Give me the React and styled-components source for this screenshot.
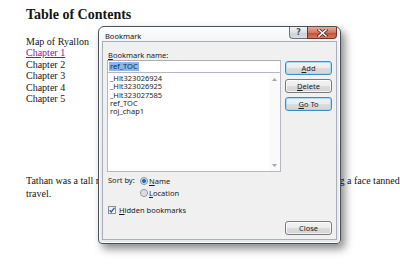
import React from 'react'
import styled, { createGlobalStyle } from 'styled-components'

const bookmarks = ['_Hlt323026924', '_Hlt323026925', '_Hlt323027585', 'ref_TOC', 'roj_chap1']
const chapters = ['Chapter 1', 'Chapter 2', 'Chapter 3', 'Chapter 4', 'Chapter 5']

const GlobalStyle = createGlobalStyle`
  html, body {
    margin: 0;
    padding: 0;
    background: #fff;
    overflow: hidden;
  }
`

class App extends React.Component {
  render () {
    return (
      <Page>
        <GlobalStyle />
        <Heading>Table of Contents</Heading>
        <TocList>
          <TocEntry>Map of Ryallon</TocEntry>
          {chapters.map((c, i) => (
            <TocEntry key={c} $visited={i === 0}>{c}</TocEntry>
          ))}
        </TocList>
        <Story>
          Tathan was a tall man with a rather lean, wiry build and long dark hair, sporting a face tanned by years of
          <br />
          travel.
        </Story>

        <Window>
          <TitleBar>
            <Title>Bookmark</Title>
            <CaptionButtons>
              <HelpButton>?</HelpButton>
              <CloseCaption>
                <svg width='11' height='8' viewBox='0 0 11 8'>
                  <path d='M2 1 L9 7 M9 1 L2 7' stroke='#5a1f1a' strokeWidth='3' strokeLinecap='square' />
                  <path d='M2 1 L9 7 M9 1 L2 7' stroke='#fff' strokeWidth='1.6' strokeLinecap='square' />
                </svg>
              </CloseCaption>
            </CaptionButtons>
          </TitleBar>

          <Client>
            <LeftCol>
              <FieldLabel><u>B</u>ookmark name:</FieldLabel>
              <NameInput><Selected>ref_TOC</Selected></NameInput>
              <ListBox>
                <Items>
                  {bookmarks.map(b => <Item key={b}>{b}</Item>)}
                </Items>
                <ScrollTrack>
                  <ArrowBox>
                    <svg width='5' height='3' viewBox='0 0 5 3'><path d='M0 3 L2.5 0 L5 3 Z' fill='#a4a4a4' /></svg>
                  </ArrowBox>
                  <ArrowBox>
                    <svg width='5' height='3' viewBox='0 0 5 3'><path d='M0 0 L2.5 3 L5 0 Z' fill='#a4a4a4' /></svg>
                  </ArrowBox>
                </ScrollTrack>
              </ListBox>

              <SortRow>
                <SortLabel>Sort by:</SortLabel>
                <RadioGroup>
                  <OptionRow>
                    <Radio $checked />
                    <span><u>N</u>ame</span>
                  </OptionRow>
                  <OptionRow>
                    <Radio />
                    <span><u>L</u>ocation</span>
                  </OptionRow>
                </RadioGroup>
              </SortRow>

              <CheckRow>
                <CheckBox>
                  <svg width='6' height='6' viewBox='0 0 6 6'>
                    <path d='M0.6 3.2 L2.3 5 L5.4 0.8' stroke='#2a56a8' strokeWidth='1.3' fill='none' />
                  </svg>
                </CheckBox>
                <span><u>H</u>idden bookmarks</span>
              </CheckRow>
            </LeftCol>

            <RightCol>
              <PushButton $focused><span><u>A</u>dd</span></PushButton>
              <PushButton><span><u>D</u>elete</span></PushButton>
              <PushButton $focused><span><u>G</u>o To</span></PushButton>
              <CloseButton>Close</CloseButton>
            </RightCol>
          </Client>
        </Window>
      </Page>
    )
  }
}

export default App

/*
Styles
 */

const Page = styled.div`
  position: relative;
  width: 400px;
  height: 271px;
  box-sizing: border-box;
  overflow: hidden;
  padding: 7px 0 0 26px;
  font-family: "Liberation Serif", "Times New Roman", serif;
  color: #141414;
`

const Heading = styled.h1`
  margin: 0;
  font-size: 14px;
  line-height: 16px;
  font-weight: bold;
`

const TocList = styled.div`
  display: flex;
  flex-direction: column;
  margin-top: 13px;
`

const TocEntry = styled.div`
  font-size: 10px;
  line-height: 11.4px;
  color: ${p => p.$visited ? '#7b1c86' : 'inherit'};
  text-decoration: ${p => p.$visited ? 'underline' : 'none'};
  align-self: flex-start;
`

const Story = styled.p`
  margin: 71px 0 0;
  font-size: 10px;
  line-height: 12.5px;
  white-space: nowrap;
`

const Window = styled.div`
  position: absolute;
  left: 98px;
  top: 26px;
  width: 243px;
  height: 218px;
  box-sizing: border-box;
  display: flex;
  flex-direction: column;
  padding: 0 3px 3px;
  border: 1px solid #4b5058;
  border-radius: 6px 6px 4px 4px;
  background: linear-gradient(#fbfcfd, #eceff3 30px, #e6e9ed);
  box-shadow: inset 0 0 0 1px rgba(255, 255, 255, 0.85), 4px 5px 9px rgba(0, 0, 0, 0.45);
  font-family: "Noto Sans", "Open Sans", sans-serif;
  font-size: 7.5px;
  color: #1b1b1b;
`

const TitleBar = styled.div`
  display: flex;
  align-items: flex-start;
  height: 14px;
`

const Title = styled.div`
  padding: 5px 0 0 3px;
  font-size: 7.5px;
  line-height: 9px;
  color: #111;
`

const CaptionButtons = styled.div`
  display: flex;
  margin-left: auto;
`

const CaptionBase = styled.div`
  height: 12px;
  box-sizing: border-box;
  display: flex;
  align-items: center;
  justify-content: center;
  border: 1px solid #6d7480;
  border-top: none;
`

const HelpButton = styled(CaptionBase)`
  width: 18px;
  border-radius: 0 0 0 4px;
  border-right: none;
  background: linear-gradient(#f1f3f5, #dde1e6 50%, #cdd2d8 51%, #d8dde2);
  font-family: "DejaVu Sans", sans-serif;
  font-size: 8px;
  font-weight: bold;
  color: #4a4f57;
`

const CloseCaption = styled(CaptionBase)`
  width: 30px;
  border-radius: 0 0 4px 0;
  border-color: #7a2e28;
  background: linear-gradient(#eaa99d, #d7735f 50%, #c24a33 51%, #d27a63);
`

const Client = styled.div`
  flex: 1;
  display: flex;
  gap: 4px;
  box-sizing: border-box;
  padding: 9px 4px 4px;
  background: #f0f0f0;
  border: 1px solid #a9afb7;
`

const LeftCol = styled.div`
  width: 174px;
  display: flex;
  flex-direction: column;
`

const FieldLabel = styled.div`
  height: 9px;
  line-height: 9px;
  padding-left: 1px;
`

const NameInput = styled.div`
  height: 13px;
  box-sizing: border-box;
  display: flex;
  align-items: center;
  padding: 0 1px;
  background: #fff;
  border: 1px solid #b5b8c0;
  border-top-color: #abadb3;
`

const Selected = styled.span`
  background: #88b8ec;
  color: #0d2b5a;
  line-height: 9px;
  padding: 0 1px;
`

const ListBox = styled.div`
  height: 99px;
  box-sizing: border-box;
  display: flex;
  background: #fff;
  border: 1px solid #b5b8c0;
  border-top: none;
`

const Items = styled.div`
  flex: 1;
  display: flex;
  flex-direction: column;
  padding: 1px 0 0 2px;
`

const Item = styled.div`
  line-height: 8.25px;
`

const ScrollTrack = styled.div`
  width: 11px;
  display: flex;
  flex-direction: column;
  justify-content: space-between;
  background: #fafafa;
`

const ArrowBox = styled.div`
  height: 12px;
  display: flex;
  align-items: center;
  justify-content: center;
`

const SortRow = styled.div`
  display: flex;
  margin-top: 3px;
  padding-left: 1px;
`

const SortLabel = styled.div`
  width: 32px;
  line-height: 11px;
`

const RadioGroup = styled.div`
  display: flex;
  flex-direction: column;
  gap: 1px;
`

const OptionRow = styled.div`
  height: 11px;
  display: flex;
  align-items: center;
  gap: 1px;
`

const Radio = styled.div`
  width: 8px;
  height: 8px;
  box-sizing: border-box;
  border-radius: 50%;
  border: 1px solid #8a8f96;
  background: ${p => p.$checked
    ? 'radial-gradient(circle, #1f6fc4 0 1.6px, #9ccaf0 2.2px, #eef3f8 2.8px)'
    : 'radial-gradient(circle, #dadde1 0 1.8px, #f1f2f4 3px)'};
`

const CheckRow = styled.div`
  height: 11px;
  display: flex;
  align-items: center;
  gap: 3px;
  margin-top: 6px;
  padding-left: 1px;
`

const CheckBox = styled.div`
  width: 8px;
  height: 8px;
  box-sizing: border-box;
  display: flex;
  align-items: center;
  justify-content: center;
  border: 1px solid #8a8f96;
  background: linear-gradient(#e9ecf0, #fbfbfc);
`

const RightCol = styled.div`
  width: 47px;
  display: flex;
  flex-direction: column;
  gap: 4px;
  padding-top: 10px;
`

const PushButton = styled.div`
  height: 14px;
  box-sizing: border-box;
  display: flex;
  align-items: center;
  justify-content: center;
  line-height: 9px;
  border: 1px solid ${p => p.$focused ? '#3c8ec8' : '#7a7a7a'};
  border-radius: 3px;
  background: linear-gradient(#f3f3f3, #ebebeb 50%, #dcdcdc 51%, #d4d4d4);
  box-shadow: inset 0 0 0 1px ${p => p.$focused ? 'rgba(160, 215, 245, 0.9)' : 'rgba(255, 255, 255, 0.7)'};
`

const CloseButton = styled(PushButton)`
  margin-top: auto;
`
